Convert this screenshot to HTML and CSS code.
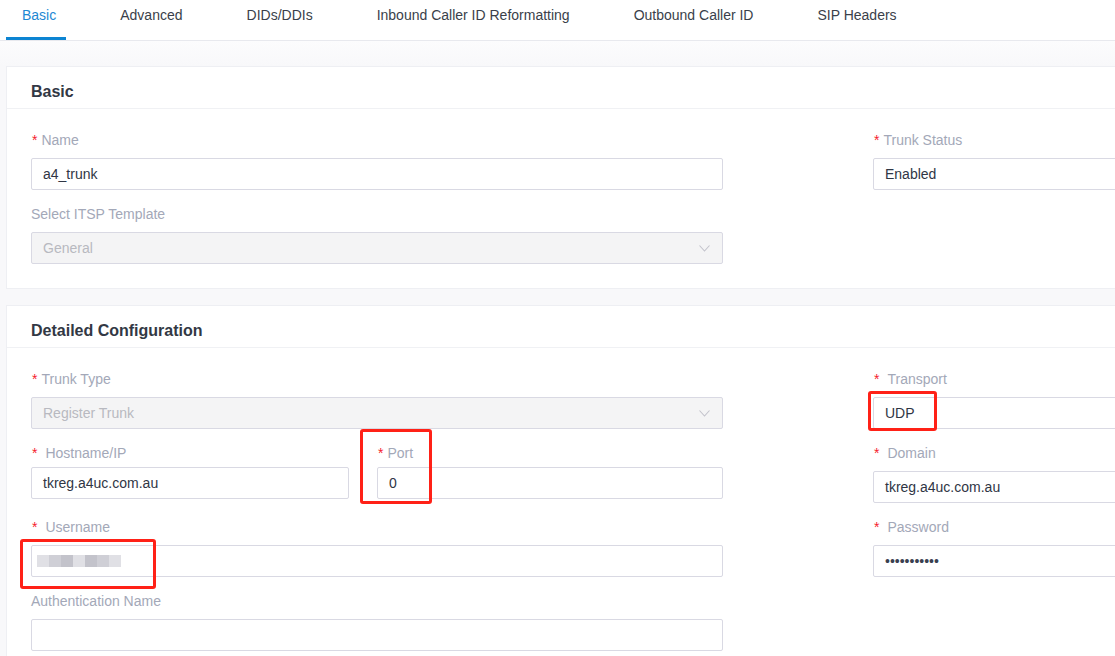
FILE: index.html
```html
<!DOCTYPE html>
<html>
<head>
<meta charset="utf-8">
<link rel="stylesheet" href="styles.css">
</head>
<body>
<div class="page">
  <div class="tabs">
    <div class="tab active">Basic</div>
    <div class="tab">Advanced</div>
    <div class="tab">DIDs/DDIs</div>
    <div class="tab">Inbound Caller ID Reformatting</div>
    <div class="tab">Outbound Caller ID</div>
    <div class="tab">SIP Headers</div>
  </div>
  <div class="main">
    <div class="card">
      <div class="card-header">Basic</div>
      <div class="card-body">
        <div class="col">
          <div class="field">
            <div class="label"><span class="req">*</span>Name</div>
            <div class="input">a4_trunk</div>
          </div>
          <div class="field">
            <div class="label">Select ITSP Template</div>
            <div class="input disabled">General<svg class="chev" width="11" height="7" viewBox="0 0 11 7"><polyline points="0.5,0.5 5.5,6 10.5,0.5" fill="none" stroke="#c3c3cc" stroke-width="1.1"/></svg></div>
          </div>
        </div>
        <div class="col">
          <div class="field">
            <div class="label"><span class="req">*</span>Trunk Status</div>
            <div class="input">Enabled</div>
          </div>
        </div>
      </div>
    </div>
    <div class="card">
      <div class="card-header">Detailed Configuration</div>
      <div class="card-body">
        <div class="col">
          <div class="field">
            <div class="label"><span class="req">*</span>Trunk Type</div>
            <div class="input disabled">Register Trunk<svg class="chev" width="11" height="7" viewBox="0 0 11 7"><polyline points="0.5,0.5 5.5,6 10.5,0.5" fill="none" stroke="#c3c3cc" stroke-width="1.1"/></svg></div>
          </div>
          <div class="split">
            <div class="field tight">
              <div class="label"><span class="req wide">*</span>Hostname/IP</div>
              <div class="input">tkreg.a4uc.com.au</div>
            </div>
            <div class="field tight">
              <div class="label"><span class="req">*</span>Port</div>
              <div class="input">0</div>
            </div>
          </div>
          <div class="field">
            <div class="label"><span class="req wide">*</span>Username</div>
            <div class="input"><span class="blur"><i class="b1"></i><i class="b2"></i><i class="b3"></i><i class="b1"></i><i class="b3"></i><i class="b2"></i><i class="b1"></i></span></div>
          </div>
          <div class="field">
            <div class="label">Authentication Name</div>
            <div class="input"></div>
          </div>
        </div>
        <div class="col">
          <div class="field">
            <div class="label"><span class="req wide">*</span>Transport</div>
            <div class="input">UDP</div>
          </div>
          <div class="field">
            <div class="label"><span class="req wide">*</span>Domain</div>
            <div class="input">tkreg.a4uc.com.au</div>
          </div>
          <div class="field">
            <div class="label"><span class="req wide">*</span>Password</div>
            <div class="input dots">•••••••••••</div>
          </div>
        </div>
      </div>
    </div>
  </div>
  <div class="mark mark-port"></div>
  <div class="mark mark-transport"></div>
  <div class="mark mark-user"></div>
</div>
</body>
</html>
```
FILE: styles.css
```css
html, body {
  margin: 0;
  padding: 0;
  overflow: hidden;
}
body {
  background: #f8f8fa;
  font-family: "Liberation Sans", Arial, sans-serif;
  font-size: 14px;
  color: #333a45;
}
.page {
  position: relative;
  width: 1620px;
  min-height: 656px;
}
.tabs {
  display: flex;
  background: #fff;
  height: 40px;
  border-bottom: 1px solid #e8e9ee;
  padding-left: 6px;
}
.tab {
  box-sizing: border-box;
  height: 40px;
  line-height: 31px;
  padding: 0 10px 0 16px;
  margin-right: 38px;
  border-bottom: 3px solid transparent;
  color: #3a3f4a;
  white-space: nowrap;
}
.tab.active {
  color: #1d88d3;
  border-bottom-color: #0c84d2;
}
.main {
  padding: 25px 0 0 6px;
  background: linear-gradient(#fcfcfd, #f8f8fa 25px);
}
.card {
  background: #fff;
  border: 1px solid #eeeff3;
  margin-bottom: 16px;
}
.card-header {
  padding: 15px 24px 6px;
  line-height: 20px;
  font-size: 16px;
  font-weight: bold;
  color: #323844;
  border-bottom: 1px solid #f0f1f4;
}
.card-body {
  display: flex;
  gap: 150px;
  padding: 21px 24px 10px;
}
.col {
  width: 692px;
  display: flex;
  flex-direction: column;
}
.split {
  display: grid;
  grid-template-columns: 318px 346px;
  column-gap: 28px;
}
.field {
  margin-bottom: 14px;
}
.field.tight {
  margin-bottom: 18px;
}
.label {
  line-height: 20px;
  height: 20px;
  margin-bottom: 8px;
  color: #a3a8b8;
  white-space: nowrap;
}
.field.tight .label {
  margin-bottom: 4px;
}
.req {
  color: #f5222d;
  margin-left: 1px;
  margin-right: 4px;
}
.req.wide {
  margin-right: 8px;
}
.input {
  box-sizing: border-box;
  height: 32px;
  border: 1px solid #d9d9e3;
  border-radius: 2px;
  padding: 0 11px;
  line-height: 30px;
  color: #2f3645;
  background: #fff;
  display: flex;
  align-items: center;
  justify-content: space-between;
}
.input.disabled {
  background: #f4f4f5;
  color: #b8b9c0;
  padding-right: 12px;
}
.chev {
  display: block;
}
.dots {
  color: #3a4050;
}
.blur {
  display: flex;
  margin-left: -6px;
  filter: blur(0.6px);
}
.blur i {
  display: block;
  width: 12px;
  height: 12px;
}
.b1 { background: #e0e0e5; }
.b2 { background: #cfcfd6; }
.b3 { background: #c3c3cb; }
.mark {
  position: absolute;
  box-sizing: border-box;
  border: 3px solid #ff2117;
  border-radius: 3px;
}
.mark-port {
  left: 360px;
  top: 429px;
  width: 72px;
  height: 75px;
}
.mark-transport {
  left: 868px;
  top: 391px;
  width: 69px;
  height: 40px;
}
.mark-user {
  left: 20px;
  top: 539px;
  width: 136px;
  height: 50px;
}
```
